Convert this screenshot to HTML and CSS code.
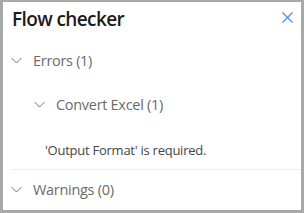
FILE: index.html
```html
<!DOCTYPE html>
<html>
<head>
<meta charset="utf-8">
<link rel="stylesheet" href="styles.css">
</head>
<body>
<div class="panel">
  <div class="header">
    <h1 class="title">Flow checker</h1>
    <button class="close" aria-label="Close">
      <svg width="11" height="11" viewBox="0 0 11 11"><path d="M0.5 0.5 L10.5 10.5 M10.5 0.5 L0.5 10.5" stroke="#4a84f0" stroke-width="1.1" fill="none"/></svg>
    </button>
  </div>
  <div class="section">
    <div class="row level1">
      <svg class="chev" width="11" height="7" viewBox="0 0 11 7"><path d="M0.5 1 L5.5 6 L10.5 1" stroke="#707070" stroke-width="1" fill="none"/></svg>
      <span class="label">Errors (1)</span>
    </div>
    <div class="row level2">
      <svg class="chev" width="11" height="7" viewBox="0 0 11 7"><path d="M0.5 1 L5.5 6 L10.5 1" stroke="#707070" stroke-width="1" fill="none"/></svg>
      <span class="label">Convert Excel (1)</span>
    </div>
    <div class="message">'Output Format' is required.</div>
  </div>
  <div class="divider"></div>
  <div class="row level1 warn">
    <svg class="chev" width="11" height="7" viewBox="0 0 11 7"><path d="M0.5 1 L5.5 6 L10.5 1" stroke="#707070" stroke-width="1" fill="none"/></svg>
    <span class="label">Warnings (0)</span>
  </div>
</div>
</body>
</html>
```
FILE: styles.css
```css
html, body {
  margin: 0;
  padding: 0;
  background: #fff;
}
body {
  font-family: "Open Sans", "Noto Sans", sans-serif;
}
.panel {
  box-sizing: border-box;
  width: 304px;
  height: 213px;
  border: 3px solid #a8a8a8;
  border-top-width: 2px;
  background: #fff;
  display: flex;
  flex-direction: column;
}
.header {
  display: flex;
  align-items: flex-start;
  justify-content: space-between;
  padding: 5px 8px 0 9px;
  height: 32px;
}
.title {
  margin: 0;
  font-size: 19px;
  font-weight: 600;
  letter-spacing: -0.6px;
  color: #1b1b1b;
  line-height: 24px;
}
.close {
  border: 0;
  background: none;
  padding: 0;
  margin-top: 5px;
  width: 11px;
  height: 11px;
  display: flex;
}
.row {
  display: flex;
  align-items: center;
  height: 22px;
  color: #6b6b6b;
  font-size: 14.5px;
  letter-spacing: -0.3px;
}
.chev {
  flex: none;
}
.level1 {
  padding-left: 8px;
  gap: 11px;
  margin-top: 10px;
}
.level2 {
  padding-left: 31px;
  gap: 11px;
  margin-top: 22px;
}
.message {
  padding-left: 42px;
  margin-top: 26px;
  font-size: 13px;
  letter-spacing: -0.25px;
  color: #454545;
  line-height: 18px;
}
.divider {
  height: 1px;
  background: #ececec;
  margin: 10px 0 0 8px;
}
.warn {
  margin-top: 8px;
}
```
